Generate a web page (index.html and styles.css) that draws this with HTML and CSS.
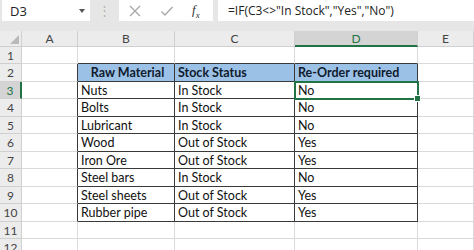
FILE: index.html
```html
<!DOCTYPE html>
<html>

<head>
    <title>Re-Order sheet</title>
    <link rel="stylesheet" href="styles.css">
</head>

<body>
    <!-- Name box and formula bar -->
    <div class="toolbar">
        <div class="namebox">
            <span>D3</span>
            <span class="arrow"></span>
        </div>
        <div class="grip">&#8942;</div>
        <div class="buttons">
            <svg width="14" height="14" viewBox="0 0 14 14"><path d="M2 2 L12 12 M12 2 L2 12" stroke="#a6a6a6" stroke-width="1.3" fill="none"/></svg>
            <svg width="14" height="14" viewBox="0 0 14 14"><path d="M1.5 7.5 L5 11 L12.5 3" stroke="#a6a6a6" stroke-width="1.3" fill="none"/></svg>
            <span class="fx">f<sub>x</sub></span>
        </div>
        <div class="formula">=IF(C3&lt;&gt;"In Stock","Yes","No")</div>
    </div>

    <!-- Sheet grid -->
    <div class="sheet">
        <div class="corner"></div>
        <div class="colhead">A</div>
        <div class="colhead">B</div>
        <div class="colhead">C</div>
        <div class="colhead active">D</div>
        <div class="colhead">E</div>

        <div class="rowhead">1</div>
        <div class="cell"></div>
        <div class="cell top"></div>
        <div class="cell top"></div>
        <div class="cell top"></div>
        <div class="cell"></div>

        <div class="rowhead">2</div>
        <div class="cell edge"></div>
        <div class="cell t head center">Raw Material</div>
        <div class="cell t head">Stock Status</div>
        <div class="cell t head">Re-Order required</div>
        <div class="cell"></div>

        <div class="rowhead active">3</div>
        <div class="cell edge"></div>
        <div class="cell t">Nuts</div>
        <div class="cell t">In Stock</div>
        <div class="cell t selected">No</div>
        <div class="cell"></div>

        <div class="rowhead">4</div>
        <div class="cell edge"></div>
        <div class="cell t">Bolts</div>
        <div class="cell t">In Stock</div>
        <div class="cell t">No</div>
        <div class="cell"></div>

        <div class="rowhead">5</div>
        <div class="cell edge"></div>
        <div class="cell t">Lubricant</div>
        <div class="cell t">In Stock</div>
        <div class="cell t">No</div>
        <div class="cell"></div>

        <div class="rowhead">6</div>
        <div class="cell edge"></div>
        <div class="cell t">Wood</div>
        <div class="cell t">Out of Stock</div>
        <div class="cell t">Yes</div>
        <div class="cell"></div>

        <div class="rowhead">7</div>
        <div class="cell edge"></div>
        <div class="cell t">Iron Ore</div>
        <div class="cell t">Out of Stock</div>
        <div class="cell t">Yes</div>
        <div class="cell"></div>

        <div class="rowhead">8</div>
        <div class="cell edge"></div>
        <div class="cell t">Steel bars</div>
        <div class="cell t">In Stock</div>
        <div class="cell t">No</div>
        <div class="cell"></div>

        <div class="rowhead">9</div>
        <div class="cell edge"></div>
        <div class="cell t">Steel sheets</div>
        <div class="cell t">Out of Stock</div>
        <div class="cell t">Yes</div>
        <div class="cell"></div>

        <div class="rowhead">10</div>
        <div class="cell edge"></div>
        <div class="cell t">Rubber pipe</div>
        <div class="cell t">Out of Stock</div>
        <div class="cell t">Yes</div>
        <div class="cell"></div>

        <div class="rowhead">11</div>
        <div class="cell"></div>
        <div class="cell"></div>
        <div class="cell"></div>
        <div class="cell"></div>
        <div class="cell"></div>

        <div class="rowhead">12</div>
        <div class="cell"></div>
        <div class="cell"></div>
        <div class="cell"></div>
        <div class="cell"></div>
        <div class="cell"></div>
    </div>
</body>

</html>
```

FILE: styles.css
```css
body {
    margin: 0;
    width: 474px;
    height: 250px;
    overflow: hidden;
    background-color: #e6e6e6;
    font-family: Lato, "Liberation Sans", sans-serif;
    color: #111;
}

.toolbar {
    display: flex;
    height: 21px;
    padding-left: 2px;
    margin-bottom: 10px;
}

.namebox {
    display: flex;
    align-items: center;
    justify-content: space-between;
    width: 88px;
    box-sizing: border-box;
    padding: 0 5px 0 8px;
    background-color: white;
    font-family: "Open Sans", sans-serif;
    font-size: 13px;
    color: #222;
}

.arrow {
    border-left: 3px solid transparent;
    border-right: 3px solid transparent;
    border-top: 4px solid #555;
}

.grip {
    width: 29px;
    text-align: center;
    line-height: 21px;
    color: #b5b5b5;
    font-size: 13px;
}

.buttons {
    display: flex;
    align-items: center;
    width: 94px;
    background-color: white;
    padding-left: 9px;
    box-sizing: border-box;
    gap: 18px;
}

.fx {
    font-family: "Liberation Serif", serif;
    font-style: italic;
    font-size: 13px;
    color: #333;
}

.fx sub {
    font-size: 9px;
}

.formula {
    flex: 1;
    margin-left: 5px;
    padding-left: 10px;
    background-color: white;
    font-family: "Open Sans", sans-serif;
    font-size: 12px;
    line-height: 21px;
    color: #222;
}

.sheet {
    display: grid;
    grid-template-columns: 22px 56px 97px 120px 123px 56px;
    grid-template-rows: 16px 17px;
    grid-auto-rows: 17.55px;
    background-color: white;
}

.corner,
.colhead,
.rowhead {
    box-sizing: border-box;
    background-color: #ececec;
    color: #444;
    font-size: 12px;
    border-right: 1px solid #d0d0d0;
    border-bottom: 1px solid #d0d0d0;
}

.corner {
    position: relative;
}

.corner::after {
    content: "";
    position: absolute;
    right: 2px;
    bottom: 2px;
    border-left: 9px solid transparent;
    border-bottom: 9px solid #b9b9b9;
}

.colhead {
    text-align: center;
    line-height: 15px;
}

.rowhead {
    text-align: center;
    line-height: 17px;
}

.colhead.active {
    background-color: #d4d4d4;
    color: #217346;
    border-bottom: 2px solid #217346;
}

.rowhead.active {
    background-color: #d4d4d4;
    color: #217346;
    border-right: 2px solid #217346;
}

.cell {
    box-sizing: border-box;
    border-right: 1px solid #dadada;
    border-bottom: 1px solid #dadada;
    font-size: 12.5px;
    line-height: 17px;
    padding-left: 3px;
    white-space: nowrap;
}

.cell.top {
    border-bottom-color: #3a3a3a;
}

.cell.edge {
    border-right-color: #3a3a3a;
}

.cell.t {
    border-right-color: #3a3a3a;
    border-bottom-color: #3a3a3a;
}

.cell.head {
    background-color: #9bc2e6;
    font-weight: bold;
    color: #111a2e;
}

.cell.center {
    text-align: center;
}

.cell.selected {
    position: relative;
    outline: 2px solid #217346;
    outline-offset: -1px;
}

.cell.selected::after {
    content: "";
    position: absolute;
    right: -4px;
    bottom: -4px;
    width: 5px;
    height: 5px;
    background-color: #217346;
    border: 1px solid white;
}
```
